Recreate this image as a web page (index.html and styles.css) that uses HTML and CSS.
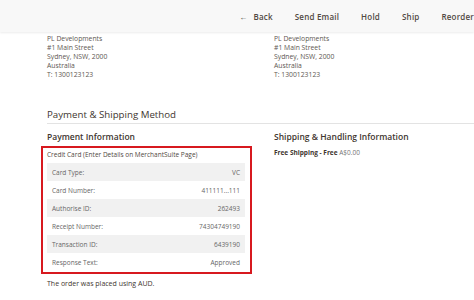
FILE: index.html
```html
<!DOCTYPE html>
<html>
<head>
    <meta charset="UTF-8">
    <link rel="stylesheet" href="styles.css">
</head>
<body>
<div class="toolbar">
    <span class="btn"><span class="arrow">&#8592;</span>Back</span>
    <span class="btn">Send Email</span>
    <span class="btn">Hold</span>
    <span class="btn">Ship</span>
    <span class="btn">Reorder</span>
</div>
<div class="cols addr-row">
    <div class="addr">
        <p>PL Developments</p>
        <p>#1 Main Street</p>
        <p>Sydney, NSW, 2000</p>
        <p>Australia</p>
        <p>T: 1300123123</p>
    </div>
    <div class="addr">
        <p>PL Developments</p>
        <p>#1 Main Street</p>
        <p>Sydney, NSW, 2000</p>
        <p>Australia</p>
        <p>T: 1300123123</p>
    </div>
</div>
<h2 class="section-title">Payment &amp; Shipping Method</h2>
<div class="cols">
    <div>
        <h3 class="sub-title">Payment Information</h3>
        <div class="pay-box">
            <p class="method">Credit Card (Enter Details on MerchantSuite Page)</p>
            <table class="info">
                <tr><td>Card Type:</td><td>VC</td></tr>
                <tr><td>Card Number:</td><td>411111...111</td></tr>
                <tr><td>Authorise ID:</td><td>262493</td></tr>
                <tr><td>Receipt Number:</td><td>74304749190</td></tr>
                <tr><td>Transaction ID:</td><td>6439190</td></tr>
                <tr><td>Response Text:</td><td>Approved</td></tr>
            </table>
        </div>
        <p class="note">The order was placed using AUD.</p>
    </div>
    <div>
        <h3 class="sub-title">Shipping &amp; Handling Information</h3>
        <p class="ship"><b>Free Shipping - Free</b> A$0.00</p>
    </div>
</div>
</body>
</html>
```

FILE: styles.css
```css
body,p,h2,h3,div,table,td{margin: 0;padding: 0;}
body{font-family: "Open Sans", "Liberation Sans", sans-serif;color: #41362f;background: #fff;overflow: hidden;}
.toolbar{
    display: flex;justify-content: flex-end;align-items: center;
    height: 32px;background: #f8f8f8;
    box-shadow: 0 1px 2px rgba(0,0,0,.08);
}
.btn{font-size: 8px;font-weight: 600;color: #514943;margin-left: 22px;letter-spacing: .2px;white-space: nowrap;}
.btn .arrow{margin-right: 6px;font-weight: 400;}
.cols{display: grid;grid-template-columns: 205px 1fr;column-gap: 22px;padding-left: 47px;}
.addr-row{margin-top: 2px;}
.addr p{font-size: 6.8px;line-height: 9px;color: #5e5752;}
.section-title{
    font-size: 9.7px;font-weight: 400;line-height: 14px;
    margin: 29px 0 0 47px;padding-bottom: 1px;
    border-bottom: 1px solid #e3e3e3;
}
.sub-title{font-size: 8.5px;font-weight: 600;line-height: 12px;margin-top: 7px;}
.pay-box{border: 2px solid #d7191f;margin: 3px 0 0 -6px;padding: 1px 5px 1px 4px;}
.method{font-size: 6.5px;line-height: 11px;color: #514943;margin-bottom: 3px;}
.info{width: 100%;border-collapse: collapse;font-size: 6.5px;color: #666;}
.info td{height: 18px;padding: 0 5px;}
.info td:last-child{text-align: right;}
.info tr:nth-child(odd){background: #f1f1f1;}
.note{font-size: 7px;line-height: 10px;margin-top: 5px;color: #41362f;}
.ship{font-size: 6.5px;line-height: 11px;margin-top: 4px;color: #757575;}
.ship b{color: #41362f;font-weight: 700;}
```
